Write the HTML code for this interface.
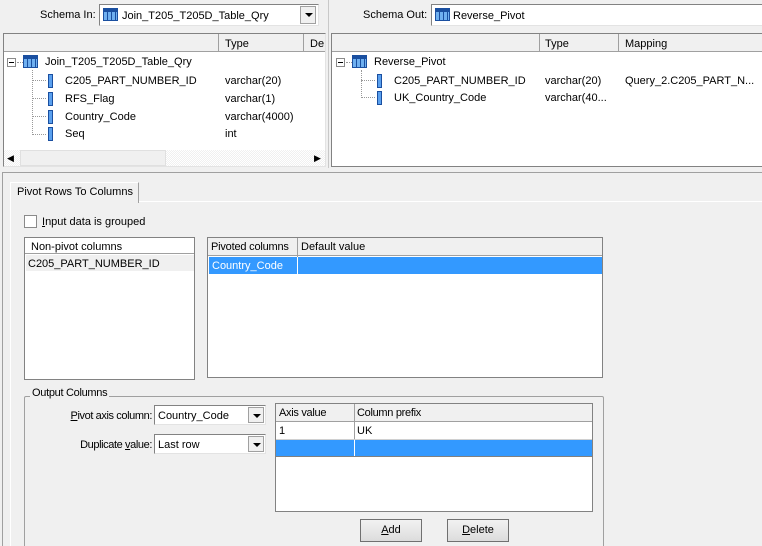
<!DOCTYPE html><html style="overflow:hidden;width:762px;height:546px"><head><style>
*{box-sizing:border-box}body{margin:0;width:762px;height:546px;background:#f0f0f0;font-family:"Liberation Sans",sans-serif;font-size:11px;color:#000;position:relative;overflow:hidden}
.a{position:absolute}
.t{position:absolute;white-space:nowrap;line-height:14px}
.r{position:absolute;white-space:nowrap;line-height:14px;text-align:right}
.box{position:absolute;background:#fff;border:1px solid #828282;border-right-color:#e3e3e3;border-bottom-color:#e3e3e3}
.hd{position:absolute;background:#f0f0f0;border-bottom:1px solid #a0a0a0}
.vl{position:absolute;width:1px;background:#a0a0a0}
.ico{position:absolute;width:15px;height:13px;border:1px solid #1a4fa0;background:repeating-linear-gradient(90deg,#6fb0f0 0 3px,#1a4fa0 3px 4px);}
.ico:before{content:"";position:absolute;left:0;right:0;top:0;height:3px;background:#1a4fa0}
.col{position:absolute;width:5px;height:14px;border:1px solid #1a4fa0;background:#5aa0ee}
.btn{position:absolute;border:1px solid #707070;background:linear-gradient(#f2f2f2,#dcdcdc);text-align:center;line-height:21px}
.dd{position:absolute;width:16px;border:1px solid #a0a0a0;background:#f0f0f0}
.dd:after{content:"";position:absolute;left:4px;top:6px;border:4px solid transparent;border-top:4px solid #000}
.pm{position:absolute;width:9px;height:9px;border:1px solid #8a8a8a;background:#fff}
.pm:after{content:"";position:absolute;left:1px;top:3px;width:5px;height:1px;background:#000}
.dot{position:absolute;border-left:1px dotted #999;border-bottom:1px dotted #999}
</style></head><body>
<div class="t" style="left:40px;top:8px">Schema In:</div>
<div class="box" style="left:99px;top:4px;width:220px;height:22px"></div>
<div class="ico" style="left:103px;top:8px"></div>
<div class="t" style="left:122px;top:9px">Join_T205_T205D_Table_Qry</div>
<div class="dd" style="left:300px;top:6px;height:18px"></div>
<div class="box" style="left:3px;top:33px;width:323px;height:134px"></div>
<div class="hd" style="left:4px;top:34px;width:321px;height:18px"></div>
<div class="vl" style="left:218px;top:34px;height:18px"></div>
<div class="vl" style="left:303px;top:34px;height:18px"></div>
<div class="t" style="left:225px;top:37px">Type</div>
<div class="t" style="left:310px;top:37px">De</div>
<div class="pm" style="left:7px;top:58px"></div>
<div class="dot" style="left:17px;top:62px;width:6px;height:0;border-left:none"></div>
<div class="ico" style="left:23px;top:55px"></div>
<div class="t" style="left:45px;top:55px">Join_T205_T205D_Table_Qry</div>
<div class="dot" style="left:32px;top:70px;width:14px;height:65px"></div>
<div class="dot" style="left:32px;top:80px;width:14px;height:0;border-left:none"></div>
<div class="dot" style="left:32px;top:98px;width:14px;height:0;border-left:none"></div>
<div class="dot" style="left:32px;top:116px;width:14px;height:0;border-left:none"></div>
<div class="col" style="left:48px;top:74px"></div><div class="t" style="left:65px;top:74px">C205_PART_NUMBER_ID</div><div class="t" style="left:225px;top:74px">varchar(20)</div>
<div class="col" style="left:48px;top:92px"></div><div class="t" style="left:65px;top:92px">RFS_Flag</div><div class="t" style="left:225px;top:92px">varchar(1)</div>
<div class="col" style="left:48px;top:110px"></div><div class="t" style="left:65px;top:110px">Country_Code</div><div class="t" style="left:225px;top:110px">varchar(4000)</div>
<div class="col" style="left:48px;top:127px"></div><div class="t" style="left:65px;top:127px">Seq</div><div class="t" style="left:225px;top:127px">int</div>
<div class="a" style="left:4px;top:150px;width:321px;height:16px;background:repeating-conic-gradient(#f0f0f0 0 25%,#fff 0 50%) 0 0/2px 2px"></div>
<div class="a" style="left:20px;top:150px;width:146px;height:16px;background:#f0f0f0;border:1px solid #e0e0e0"></div>
<div class="t" style="left:7px;top:151px;font-size:9px">◀</div>
<div class="t" style="left:314px;top:151px;font-size:9px">▶</div>
<div class="vl" style="left:328px;top:0;height:168px;background:#c8c8c8"></div>
<div class="t" style="left:363px;top:8px">Schema Out:</div>
<div class="box" style="left:431px;top:4px;width:340px;height:22px"></div>
<div class="ico" style="left:435px;top:8px"></div>
<div class="t" style="left:453px;top:9px">Reverse_Pivot</div>
<div class="box" style="left:331px;top:33px;width:440px;height:134px;border-bottom-color:#828282"></div>
<div class="hd" style="left:332px;top:34px;width:440px;height:18px"></div>
<div class="vl" style="left:539px;top:34px;height:18px"></div>
<div class="vl" style="left:618px;top:34px;height:18px"></div>
<div class="t" style="left:545px;top:37px">Type</div>
<div class="t" style="left:625px;top:37px">Mapping</div>
<div class="pm" style="left:336px;top:58px"></div>
<div class="dot" style="left:346px;top:62px;width:6px;height:0;border-left:none"></div>
<div class="ico" style="left:352px;top:55px"></div>
<div class="t" style="left:374px;top:55px">Reverse_Pivot</div>
<div class="dot" style="left:361px;top:70px;width:14px;height:28px"></div>
<div class="dot" style="left:361px;top:80px;width:14px;height:0;border-left:none"></div>
<div class="col" style="left:377px;top:74px"></div><div class="t" style="left:394px;top:74px">C205_PART_NUMBER_ID</div><div class="t" style="left:545px;top:74px">varchar(20)</div><div class="t" style="left:625px;top:74px">Query_2.C205_PART_N...</div>
<div class="col" style="left:377px;top:91px"></div><div class="t" style="left:394px;top:91px">UK_Country_Code</div><div class="t" style="left:545px;top:91px">varchar(40...</div>
<div class="a" style="left:2px;top:172px;width:760px;height:374px;border-top:1px solid #a0a0a0;border-left:1px solid #a0a0a0"></div>
<div class="a" style="left:10px;top:201px;width:752px;height:345px;border-top:1px solid #fff;border-left:1px solid #fff"></div>
<div class="a" style="left:10px;top:182px;width:129px;height:21px;background:#f0f0f0;border:1px solid #fff;border-right:1px solid #a0a0a0;border-bottom:none"></div>
<div class="t" style="left:17px;top:185px">Pivot Rows To Columns</div>
<div class="a" style="left:24px;top:215px;width:13px;height:13px;background:#fff;border:1px solid #8a8a8a"></div>
<div class="t" style="left:42px;top:215px"><u>I</u>nput data is grouped</div>
<div class="box" style="left:24px;top:237px;width:171px;height:143px;border-color:#828282"></div>
<div class="hd" style="left:25px;top:238px;width:169px;height:16px;background:#fff;border-bottom:1px solid #a0a0a0"></div>
<div class="t" style="left:31px;top:240px">Non-pivot columns</div>
<div class="a" style="left:26px;top:255px;width:168px;height:16px;background:#f0f0f0"></div>
<div class="t" style="left:28px;top:257px">C205_PART_NUMBER_ID</div>
<div class="box" style="left:207px;top:237px;width:396px;height:141px;border-color:#828282"></div>
<div class="hd" style="left:208px;top:238px;width:394px;height:18px"></div>
<div class="vl" style="left:297px;top:238px;height:36px"></div>
<div class="t" style="left:211px;top:240px;letter-spacing:-0.2px">Pivoted columns</div>
<div class="t" style="left:301px;top:240px">Default value</div>
<div class="a" style="left:209px;top:257px;width:393px;height:17px;background:#3399ff"></div>
<div class="vl" style="left:297px;top:257px;height:17px;background:#fff"></div>
<div class="t" style="left:212px;top:259px;color:#fff">Country_Code</div>
<div class="a" style="left:24px;top:396px;width:580px;height:160px;border:1px solid #a0a0a0;border-radius:2px"></div>
<div class="t" style="left:30px;top:386px;background:#f0f0f0;padding:0 2px;letter-spacing:-0.3px">Output Columns</div>
<div class="r" style="right:610px;top:409px;letter-spacing:-0.4px"><u>P</u>ivot axis column:</div>
<div class="box" style="left:154px;top:405px;width:112px;height:20px"></div>
<div class="t" style="left:158px;top:409px">Country_Code</div>
<div class="dd" style="left:248px;top:407px;height:16px"></div>
<div class="r" style="right:610px;top:438px;letter-spacing:-0.4px">Duplicate <u>v</u>alue:</div>
<div class="box" style="left:154px;top:434px;width:112px;height:20px"></div>
<div class="t" style="left:158px;top:438px">Last row</div>
<div class="dd" style="left:248px;top:436px;height:16px"></div>
<div class="box" style="left:275px;top:403px;width:318px;height:109px;border-color:#828282"></div>
<div class="hd" style="left:276px;top:404px;width:316px;height:18px"></div>
<div class="vl" style="left:354px;top:404px;height:53px"></div>
<div class="t" style="left:279px;top:406px;letter-spacing:-0.3px">Axis value</div>
<div class="t" style="left:357px;top:406px;letter-spacing:-0.3px">Column prefix</div>
<div class="a" style="left:276px;top:439px;width:316px;height:1px;background:#d0d0d0"></div>
<div class="t" style="left:279px;top:424px">1</div>
<div class="t" style="left:357px;top:424px">UK</div>
<div class="a" style="left:276px;top:440px;width:316px;height:17px;background:#3399ff;border-bottom:1px solid #808080"></div>
<div class="vl" style="left:354px;top:440px;height:16px;background:#fff"></div>
<div class="btn" style="left:360px;top:519px;width:62px;height:23px"><u>A</u>dd</div>
<div class="btn" style="left:447px;top:519px;width:62px;height:23px"><u>D</u>elete</div>
</body></html>
